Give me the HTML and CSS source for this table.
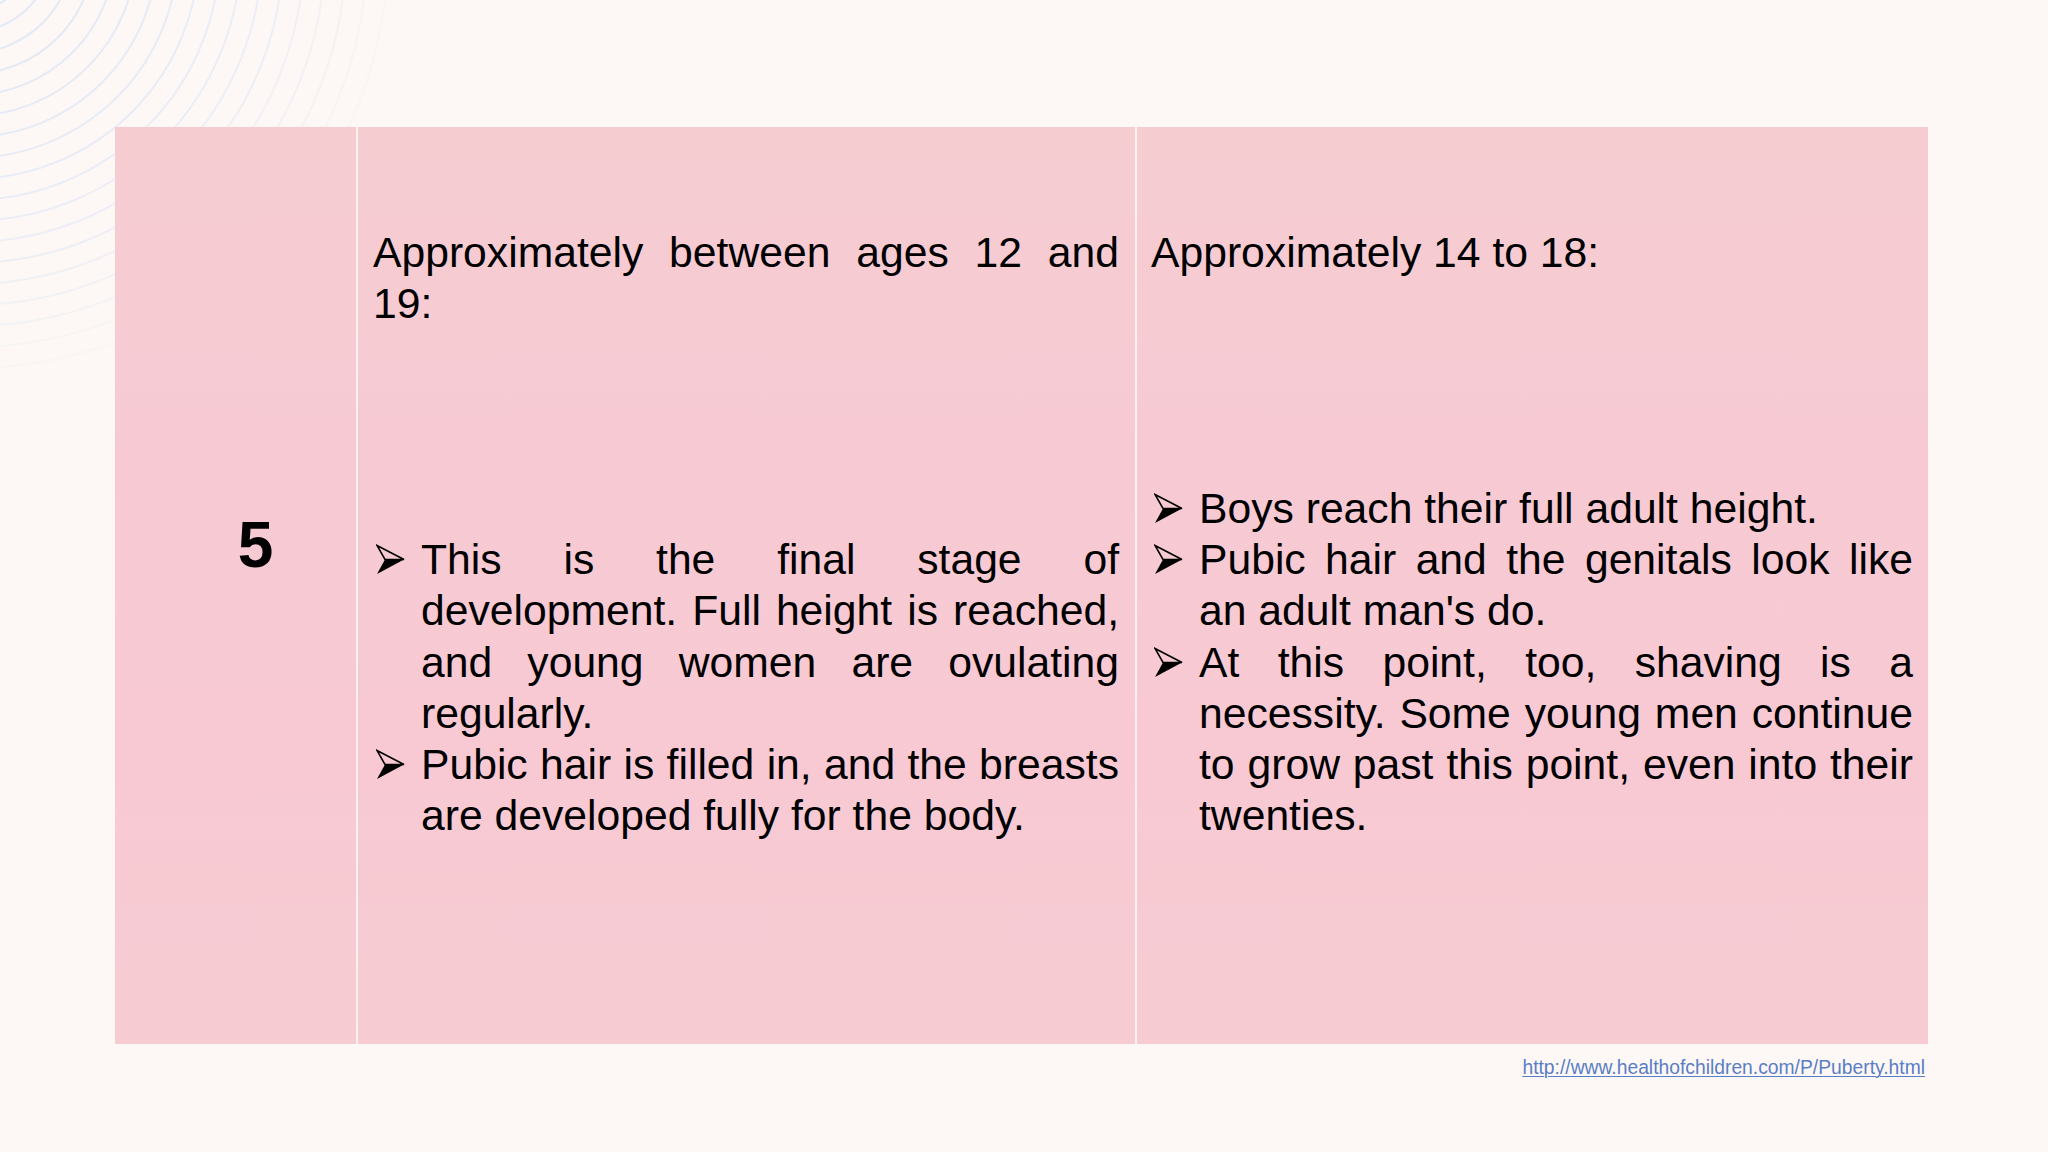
FILE: index.html
```html
<!DOCTYPE html>
<html lang="en">
<head>
<meta charset="utf-8">
<title>Puberty – Stage 5</title>
<link rel="stylesheet" href="styles.css">
</head>
<body>
<div class="slide">
  <svg class="arcs" width="440" height="400" viewBox="0 0 440 400" aria-hidden="true">
    <g fill="none" stroke="#dbe4f6" stroke-width="2">
      <circle cx="-30" cy="-50" r="40" stroke-opacity="0.8"/>
      <circle cx="-30" cy="-50" r="61" stroke-opacity="0.8"/>
      <circle cx="-30" cy="-50" r="82" stroke-opacity="0.78"/>
      <circle cx="-30" cy="-50" r="103" stroke-opacity="0.76"/>
      <circle cx="-30" cy="-50" r="124" stroke-opacity="0.74"/>
      <circle cx="-30" cy="-50" r="145" stroke-opacity="0.72"/>
      <circle cx="-30" cy="-50" r="166" stroke-opacity="0.7"/>
      <circle cx="-30" cy="-50" r="187" stroke-opacity="0.67"/>
      <circle cx="-30" cy="-50" r="208" stroke-opacity="0.64"/>
      <circle cx="-30" cy="-50" r="229" stroke-opacity="0.6"/>
      <circle cx="-30" cy="-50" r="250" stroke-opacity="0.56"/>
      <circle cx="-30" cy="-50" r="271" stroke-opacity="0.52"/>
      <circle cx="-30" cy="-50" r="292" stroke-opacity="0.48"/>
      <circle cx="-30" cy="-50" r="313" stroke-opacity="0.44"/>
      <circle cx="-30" cy="-50" r="334" stroke-opacity="0.4"/>
      <circle cx="-30" cy="-50" r="355" stroke-opacity="0.34"/>
      <circle cx="-30" cy="-50" r="376" stroke-opacity="0.28"/>
      <circle cx="-30" cy="-50" r="397" stroke-opacity="0.2"/>
      <circle cx="-30" cy="-50" r="418" stroke-opacity="0.12"/>
    </g>
  </svg>

  <div class="content">
    <div class="table">
      <div class="cell cell-num">
        <span class="num">5</span>
      </div>

      <div class="cell cell-girls">
        <p class="heading">Approximately between ages 12 and 19:</p>
        <ul class="bullets">
          <li>
            <span class="mk"><svg width="29" height="31" viewBox="0 0 29 31"><polygon points="1,1.5 28,15.5 9,15.5" fill="none" stroke="#000" stroke-width="1.6" stroke-linejoin="miter"/><polygon points="9,15.5 28,15.5 1,30" fill="#000"/></svg></span>
            <span class="txt">This is the final stage of development. Full height is reached, and young women are ovulating regularly.</span>
          </li>
          <li>
            <span class="mk"><svg width="29" height="31" viewBox="0 0 29 31"><polygon points="1,1.5 28,15.5 9,15.5" fill="none" stroke="#000" stroke-width="1.6" stroke-linejoin="miter"/><polygon points="9,15.5 28,15.5 1,30" fill="#000"/></svg></span>
            <span class="txt">Pubic hair is filled in, and the breasts are developed fully for the body.</span>
          </li>
        </ul>
      </div>

      <div class="cell cell-boys">
        <p class="heading">Approximately 14 to 18:</p>
        <ul class="bullets">
          <li>
            <span class="mk"><svg width="29" height="31" viewBox="0 0 29 31"><polygon points="1,1.5 28,15.5 9,15.5" fill="none" stroke="#000" stroke-width="1.6" stroke-linejoin="miter"/><polygon points="9,15.5 28,15.5 1,30" fill="#000"/></svg></span>
            <span class="txt">Boys reach their full adult height.</span>
          </li>
          <li>
            <span class="mk"><svg width="29" height="31" viewBox="0 0 29 31"><polygon points="1,1.5 28,15.5 9,15.5" fill="none" stroke="#000" stroke-width="1.6" stroke-linejoin="miter"/><polygon points="9,15.5 28,15.5 1,30" fill="#000"/></svg></span>
            <span class="txt">Pubic hair and the genitals look like an adult man's do.</span>
          </li>
          <li>
            <span class="mk"><svg width="29" height="31" viewBox="0 0 29 31"><polygon points="1,1.5 28,15.5 9,15.5" fill="none" stroke="#000" stroke-width="1.6" stroke-linejoin="miter"/><polygon points="9,15.5 28,15.5 1,30" fill="#000"/></svg></span>
            <span class="txt">At this point, too, shaving is a necessity. Some young men continue to grow past this point, even into their twenties.</span>
          </li>
        </ul>
      </div>
    </div>

    <div class="source">
      <a class="link" href="#">http://www.healthofchildren.com/P/Puberty.html</a>
    </div>
  </div>
</div>
</body>
</html>
```

FILE: styles.css
```css
* {
  box-sizing: border-box;
}

html, body {
  margin: 0;
  padding: 0;
}

body {
  width: 2048px;
  height: 1152px;
  overflow: hidden;
  background: #fdf8f5;
  font-family: "Liberation Sans", Arial, sans-serif;
  color: #000;
}

.slide {
  position: relative;
  width: 2048px;
  height: 1152px;
}

.arcs {
  position: absolute;
  left: 0;
  top: 0;
}

.content {
  position: relative;
  padding: 127px 0 0 115px;
  width: 1928px;
}

.table {
  display: grid;
  grid-template-columns: 241px 779px 793px;
  height: 917px;
  background: linear-gradient(180deg, #f5cdd1 0%, #f7cad3 35%, #f8c9d3 70%, #f6ccd2 100%);
}

.cell {
  height: 100%;
}

.cell-num {
  padding: 386px 0 0 40px;
  text-align: center;
}

.num {
  display: block;
  font-weight: bold;
  font-size: 64px;
  line-height: 64px;
}

.cell-girls,
.cell-boys {
  border-left: 2px solid #fdf1f1;
  padding-top: 100px;
  font-size: 42.67px;
  line-height: 51.2px;
}

.cell-girls {
  padding-left: 15px;
  padding-right: 16px;
}

.cell-boys {
  padding-left: 14px;
  padding-right: 15px;
}

.heading {
  margin: 0;
  text-align: justify;
}

.bullets {
  list-style: none;
  margin: 204.8px 0 0 0;
  padding: 0;
}

.bullets li {
  display: flex;
  align-items: flex-start;
}

.mk {
  flex: 0 0 48px;
  width: 48px;
  height: 51.2px;
  display: flex;
  align-items: center;
  padding-left: 3px;
}

.mk svg {
  display: block;
}

.txt {
  flex: 1 1 auto;
  text-align: justify;
}

.source {
  display: flex;
  justify-content: flex-end;
  padding: 12px 3px 0 0;
}

.link {
  font-size: 19.3px;
  line-height: 24px;
  color: #5a7ec5;
  text-decoration: underline;
  text-decoration-thickness: 1px;
  text-underline-offset: 2px;
}
```
